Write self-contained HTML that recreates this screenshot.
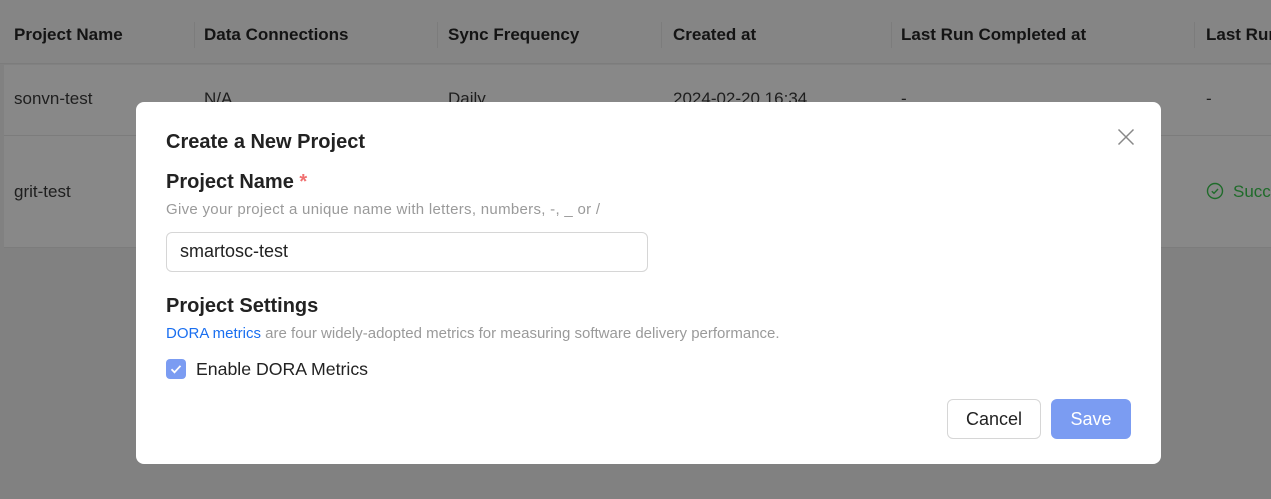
<!DOCTYPE html>
<html><head><style>
*{box-sizing:border-box;margin:0;padding:0}
body{width:1271px;height:499px;overflow:hidden;background:#818181;font-family:"Liberation Sans",sans-serif;position:relative}
.hdr{position:absolute;top:0;left:0;right:0;height:64px;background:#858585;border-bottom:1px solid #7c7c7c}
.th{position:absolute;top:25px;font-weight:bold;font-size:17px;color:#141414;white-space:nowrap}
.sep{position:absolute;top:22px;width:1px;height:26px;background:#7c7c7c}
.row{position:absolute;left:4px;right:0;background:#888;border-bottom:1px solid #7c7c7c}
.td{position:absolute;font-size:17px;color:#1e1e1e;white-space:nowrap}
.modal{position:absolute;left:136px;top:102px;width:1025px;height:362px;background:#fff;border-radius:8px}
.m{position:absolute;white-space:nowrap}
</style></head><body>
<div class="hdr"></div>
<div class="th" style="left:14px">Project Name</div>
<div class="sep" style="left:194px"></div>
<div class="th" style="left:204px">Data Connections</div>
<div class="sep" style="left:437px"></div>
<div class="th" style="left:448px">Sync Frequency</div>
<div class="sep" style="left:661px"></div>
<div class="th" style="left:673px">Created at</div>
<div class="sep" style="left:891px"></div>
<div class="th" style="left:901px">Last Run Completed at</div>
<div class="sep" style="left:1194px"></div>
<div class="th" style="left:1206px">Last Run</div>
<div class="row" style="top:65px;height:71px"></div>
<div class="row" style="top:136px;height:112px"></div>
<div class="td" style="left:14px;top:89px">sonvn-test</div>
<div class="td" style="left:204px;top:89px">N/A</div>
<div class="td" style="left:448px;top:89px">Daily</div>
<div class="td" style="left:673px;top:89px">2024-02-20 16:34</div>
<div class="td" style="left:901px;top:89px">-</div>
<div class="td" style="left:1206px;top:89px">-</div>
<div class="td" style="left:14px;top:182px">grit-test</div>
<svg style="position:absolute;left:1206px;top:182px" width="18" height="18" viewBox="0 0 18 18"><circle cx="9" cy="9" r="7.5" fill="none" stroke="#1f6b2a" stroke-width="1.4"/><path d="M5.8 9.2l2.2 2.1 4-4.3" fill="none" stroke="#1f6b2a" stroke-width="1.4"/></svg>
<div class="td" style="left:1233px;top:182px;color:#1f6b2a">Success</div>

<div class="modal">
<div class="m" style="left:30px;top:29px;font-size:20px;font-weight:bold;color:#222">Create a New Project</div>
<svg class="m" style="left:981px;top:26px" width="18" height="18" viewBox="0 0 18 18"><path d="M1.5 1.5l15 15M16.5 1.5l-15 15" stroke="#888" stroke-width="1.5"/></svg>
<div class="m" style="left:30px;top:69px;font-size:20px;font-weight:bold;color:#222">Project Name <span style="color:#f07070">*</span></div>
<div class="m" style="left:30px;top:99px;font-size:15px;letter-spacing:0.3px;color:#9a9a9a">Give your project a unique name with letters, numbers, -, _ or /</div>
<div class="m" style="left:30px;top:130px;width:482px;height:40px;border:1px solid #d6d6d6;border-radius:6px;font-size:18px;color:#222;padding:8px 13px">smartosc-test</div>
<div class="m" style="left:30px;top:193px;font-size:20px;font-weight:bold;color:#222">Project Settings</div>
<div class="m" style="left:30px;top:223px;font-size:15px;color:#9a9a9a"><span style="color:#1a6ff0">DORA metrics</span> are four widely-adopted metrics for measuring software delivery performance.</div>
<div class="m" style="left:30px;top:257px;width:20px;height:20px;background:#7b9cf2;border-radius:4px"><svg width="20" height="20" viewBox="0 0 20 20"><path d="M5.5 10.3l3 3 6-6.5" fill="none" stroke="#fff" stroke-width="1.8"/></svg></div>
<div class="m" style="left:60px;top:257px;font-size:17.7px;color:#222">Enable DORA Metrics</div>
<div class="m" style="left:811px;top:297px;width:94px;height:40px;border:1px solid #d6d6d6;border-radius:6px;font-size:18px;color:#222;text-align:center;line-height:38px">Cancel</div>
<div class="m" style="left:915px;top:297px;width:80px;height:40px;background:#7b9cf2;border-radius:6px;font-size:18px;color:#fff;text-align:center;line-height:40px">Save</div>
</div>
</body></html>
